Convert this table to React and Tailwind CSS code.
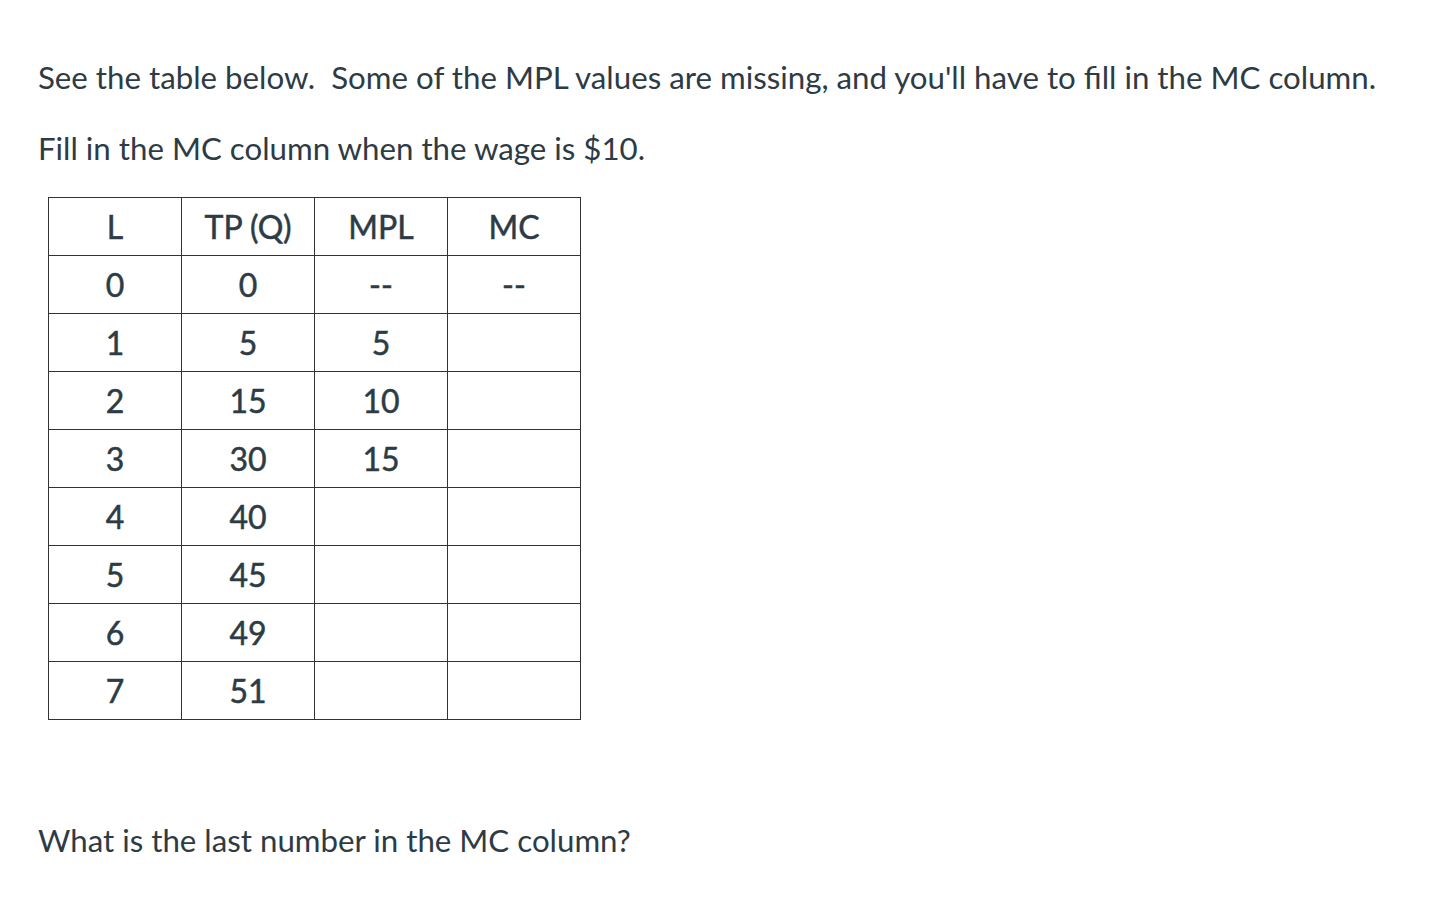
import React from 'react';

const rows = [
  ['0', '0', '--', '--'],
  ['1', '5', '5', ''],
  ['2', '15', '10', ''],
  ['3', '30', '15', ''],
  ['4', '40', '', ''],
  ['5', '45', '', ''],
  ['6', '49', '', ''],
  ['7', '51', '', ''],
];

export default function App() {
  return (
    <div className="min-h-screen bg-white text-[#2d3b45] font-['Lato',sans-serif] text-[31.25px] leading-[42px] pl-[38px] pt-[56px]">
      <p>See the table below.&nbsp; Some of the MPL values are missing, and you'll have to fill in the MC column.</p>
      <p className="mt-[29px]">Fill in the MC column when the wage is $10.</p>

      <table className="ml-[10px] mt-[28px] border-collapse text-center text-[32px] [-webkit-text-stroke:0.5px_#2d3b45]">
        <thead>
          <tr>
            {['L', 'TP (Q)', 'MPL', 'MC'].map((h) => (
              <th key={h} className="w-[133px] h-[58px] border border-[#333] font-normal p-0">{h}</th>
            ))}
          </tr>
        </thead>
        <tbody>
          {rows.map((r, i) => (
            <tr key={i}>
              {r.map((c, j) => (
                <td key={j} className="w-[133px] h-[58px] border border-[#333] p-0">{c}</td>
              ))}
            </tr>
          ))}
        </tbody>
      </table>

      <p className="mt-[99px]">What is the last number in the MC column?</p>
    </div>
  );
}
